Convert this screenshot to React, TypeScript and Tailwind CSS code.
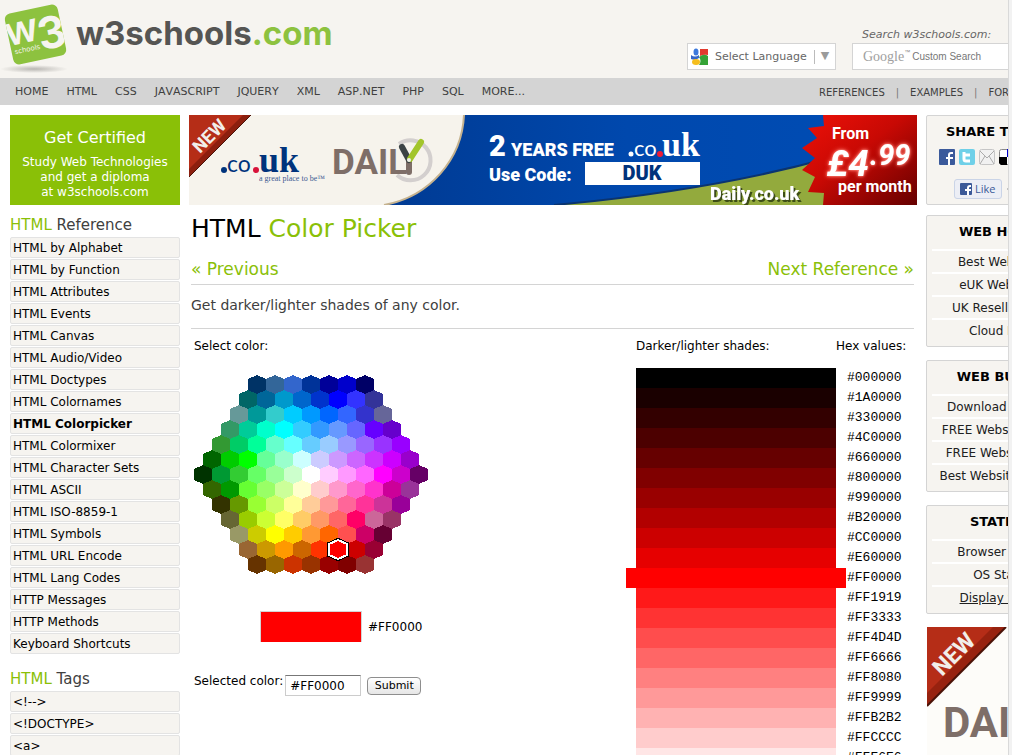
import type { ReactNode } from 'react'

const MAIN_NAV = ['HOME', 'HTML', 'CSS', 'JAVASCRIPT', 'JQUERY', 'XML', 'ASP.NET', 'PHP', 'SQL', 'MORE...']
const SIDE_NAV = ['REFERENCES', 'EXAMPLES', 'FORUM', 'ABOUT']

const REFERENCE_LINKS = [
  'HTML by Alphabet',
  'HTML by Function',
  'HTML Attributes',
  'HTML Events',
  'HTML Canvas',
  'HTML Audio/Video',
  'HTML Doctypes',
  'HTML Colornames',
  'HTML Colorpicker',
  'HTML Colormixer',
  'HTML Character Sets',
  'HTML ASCII',
  'HTML ISO-8859-1',
  'HTML Symbols',
  'HTML URL Encode',
  'HTML Lang Codes',
  'HTTP Messages',
  'HTTP Methods',
  'Keyboard Shortcuts',
]
const TAG_LINKS = ['<!-->', '<!DOCTYPE>', '<a>', '<abbr>']

const PROMO_BOXES = [
  { title: 'WEB HOSTING', links: ['Best Web Hosting', 'eUK Web Hosting', 'UK Reseller Hosting', 'Cloud Hosting'] },
  {
    title: 'WEB BUILDING',
    links: ['Download XML Editor', 'FREE Website BUILDER', 'FREE Website Creator', 'Best Website Templates'],
  },
  { title: 'STATISTICS', links: ['Browser Statistics', 'OS Statistics', 'Display Statistics'] },
]

const HEX_ROWS = [
  '003366 336699 3366CC 003399 000099 0000CC 000066',
  '006666 006699 0099CC 0066CC 0033CC 0000FF 3333FF 333399',
  '669999 009999 33CCCC 00CCFF 0099FF 0066FF 3366FF 3333CC 666699',
  '339966 00CC99 00FFCC 00FFFF 33CCFF 3399FF 6699FF 6666FF 6600FF 6600CC',
  '339933 00CC66 00FF99 66FFCC 66FFFF 66CCFF 99CCFF 9999FF 9966FF 9933FF 9900FF',
  '006600 00CC00 00FF00 66FF99 99FFCC CCFFFF CCCCFF CC99FF CC66FF CC33FF CC00FF 9900CC',
  '003300 009933 33CC33 66FF66 99FF99 CCFFCC FFFFFF FFCCFF FF99FF FF66FF FF00FF CC00CC 660066',
  '336600 009900 66FF33 99FF66 CCFF99 FFFFCC FFCCCC FF99CC FF66CC FF33CC CC0099 993399',
  '333300 669900 99FF33 CCFF66 FFFF99 FFCC99 FF9999 FF6699 FF3399 CC3399 990099',
  '666633 99CC00 CCFF33 FFFF66 FFCC66 FF9966 FF6666 FF0066 CC6699 993366',
  '999966 CCCC00 FFFF00 FFCC00 FF9933 FF6600 FF5050 CC0066 660033',
  '996633 CC9900 FF9900 CC6600 FF3300 FF0000 CC0000 990033',
  '663300 996600 CC3300 993300 990000 800000 993333',
].map((row) => row.split(' '))

const SELECTED = '#FF0000'
const SHADES = [
  '#000000', '#1A0000', '#330000', '#4C0000', '#660000', '#800000', '#990000',
  '#B20000', '#CC0000', '#E60000', '#FF0000', '#FF1919', '#FF3333', '#FF4D4D',
  '#FF6666', '#FF8080', '#FF9999', '#FFB2B2', '#FFCCCC', '#FFE6E6', '#FFFFFF',
]

function Logo() {
  return (
    <svg width="345" height="78" viewBox="0 0 345 78" role="img" aria-label="w3schools.com">
      <defs>
        <radialGradient id="logo-shadow">
          <stop offset="0" stopColor="#b9b7b3" />
          <stop offset="1" stopColor="#f6f4f0" />
        </radialGradient>
        <clipPath id="logo-tile">
          <rect x="-27" y="-26" width="54" height="52" rx="6" />
        </clipPath>
      </defs>
      <ellipse cx="34" cy="69" rx="34" ry="4" fill="url(#logo-shadow)" />
      <g transform="translate(35.5 34.5) rotate(-12)">
        <rect x="-27" y="-26" width="54" height="52" rx="6" fill="#8dc23f" />
        <g clipPath="url(#logo-tile)" fill="#f6f4f0" fontFamily="Inter, sans-serif">
          <text x="-30" y="6" fontSize="40" fontWeight="600">
            w
          </text>
          <text x="2" y="17" fontSize="44" fontWeight="700">
            3
          </text>
        </g>
        <text x="-24" y="15" fill="#f6f4f0" fontSize="7" fontFamily="'DejaVu Sans', sans-serif">
          schools
        </text>
      </g>
      <text x="76" y="45" fontSize="33" fontWeight="700" fontFamily="Inter, sans-serif" fill="#555553">
        w3schools<tspan fill="#8dc23f">.com</tspan>
      </text>
    </svg>
  )
}

function GoogleMark() {
  return (
    <svg width="18" height="18" viewBox="0 0 18 18" aria-hidden="true">
      <path d="M9 1h8v6q-4-1-8 1z" fill="#e23a2e" />
      <path d="M8 9q5-4 9-1v9H8q3-4 0-8z" fill="#35a336" />
      <ellipse cx="5" cy="4" rx="2.5" ry="3.5" fill="#3b78dc" />
      <path d="M0 7q4 3 8 0v3q-4 3-8 1z" fill="#3566c8" />
      <ellipse cx="5" cy="14" rx="4" ry="3" fill="#f5be1d" />
    </svg>
  )
}

function Header() {
  return (
    <header>
      <div className="flex h-[78px] justify-between bg-[#f6f4f0]">
        <a href="/">
          <Logo />
        </a>
        <div className="flex items-end gap-4 pb-2 pr-[10px]">
          <button
            type="button"
            className="flex h-[27px] w-[149px] items-center border border-[#d4d4d4] bg-white pl-[3px] text-[11px] text-[#666666]"
          >
            <GoogleMark />
            <span className="ml-[6px] pt-[2px]">Select Language</span>
            <span className="ml-[7px] h-[14px] w-px bg-[#bbbbbb]" />
            <span className="ml-[6px] text-[#9b9b9b]">▼</span>
          </button>
          <div className="w-[244px]">
            <label htmlFor="search" className="block pl-[10px] text-[11px] leading-4 text-[#666666] italic">
              Search w3schools.com:
            </label>
            <div className="flex h-[27px] items-center border border-[#d4d4d4] bg-white pl-[10px] text-[#888888]">
              <span className="font-['Liberation_Serif',serif] text-[14px] text-[#a0a0a0]">Google</span>
              <span className="self-start pt-1 font-['Liberation_Sans',sans-serif] text-[6px]">™</span>
              <input
                id="search"
                placeholder="Custom Search"
                className="ml-[2px] min-w-0 flex-1 font-['Liberation_Sans',sans-serif] text-[10px] outline-none placeholder:text-[#777777]"
              />
            </div>
          </div>
        </div>
      </div>
      <nav className="flex h-[27px] items-center justify-between bg-[#d4d4d4] pt-[2px] pl-[15px] text-[11px] text-[#404040] [font-kerning:none]">
        <div className="flex gap-[18px]">
          {MAIN_NAV.map((item) => (
            <a key={item} href="#">
              {item}
            </a>
          ))}
        </div>
        <div className="flex w-[287px] gap-[11px] text-[10px]">
          {SIDE_NAV.map((item, i) => (
            <span key={item} className="flex gap-[11px]">
              {i > 0 && <span className="text-[#777777]">|</span>}
              <a href="#">{item}</a>
            </span>
          ))}
        </div>
      </nav>
    </header>
  )
}

function LinkList({ topic, links }: { topic: string; links: string[] }) {
  return (
    <section>
      <h2 className="text-[15px] leading-5 text-[#404040]">
        <span className="text-[#8ac007]">HTML</span> {topic}
      </h2>
      <ul className="mt-[2px] flex flex-col gap-px">
        {links.map((link) => (
          <li key={link} className="h-[21px] rounded-xs border border-[#e3e3e3] bg-[#f6f4f0] pl-[2px] leading-5">
            <a href="#" className={link === 'HTML Colorpicker' ? 'font-bold' : undefined}>
              {link}
            </a>
          </li>
        ))}
      </ul>
    </section>
  )
}

function Sidebar() {
  return (
    <aside className="w-[170px] shrink-0 text-[12px] text-black">
      <a href="#" className="block h-[90px] bg-[#8ac007] pt-[13px] text-center leading-[15px] text-white">
        <span className="mb-[7px] block text-[16px] leading-5">Get Certified</span>
        Study Web Technologies
        <br />
        and get a diploma
        <br />
        at w3schools.com
      </a>
      <div className="flex flex-col gap-[15px] pt-[10px]">
        <LinkList topic="Reference" links={REFERENCE_LINKS} />
        <LinkList topic="Tags" links={TAG_LINKS} />
      </div>
    </aside>
  )
}

function NewRibbon() {
  return (
    <g>
      <path d="M0 0H62L0 62z" fill="#b52d17" />
      <path d="M62 0L0 62V54L54 0z" fill="#8c1f0e" />
      <path d="M62 0L0 62" stroke="#4a1208" />
      <text
        transform="translate(11 39) rotate(-45)"
        fontFamily="Roboto, sans-serif"
        fontSize="18"
        fontWeight="700"
        fill="#f1eeea"
      >
        NEW
      </text>
    </g>
  )
}

function BannerAd() {
  return (
    <svg width="728" height="90" viewBox="0 0 728 90" role="img" aria-label="Daily.co.uk domain offer" className="block">
      <defs>
        <linearGradient id="ad-blue" x1="0" x2="1">
          <stop offset="0" stopColor="#002f7d" />
          <stop offset="0.6" stopColor="#0048ad" />
          <stop offset="1" stopColor="#004db5" />
        </linearGradient>
        <linearGradient id="ad-red" x1="0" x2="1" y1="0" y2="1">
          <stop offset="0" stopColor="#ee1108" />
          <stop offset="0.45" stopColor="#c80904" />
          <stop offset="1" stopColor="#650000" />
        </linearGradient>
        <filter id="ad-glow" x="-20%" y="-30%" width="140%" height="160%">
          <feDropShadow dx="0" dy="0" stdDeviation="1" floodColor="#ff8a80" />
          <feDropShadow dx="0" dy="0" stdDeviation="2" floodColor="#ff6a5e" />
        </filter>
        <filter id="ad-drop">
          <feDropShadow dx="2" dy="2" stdDeviation="0" floodColor="#3d4d13" />
        </filter>
      </defs>
      <rect width="728" height="90" fill="url(#ad-blue)" />
      <path d="M365 90Q520 76 640 43V90z" fill="#93aa3d" />
      <path d="M365 90Q520 76 640 43" fill="none" stroke="#0a3470" strokeWidth="2" />
      <path d="M0 0H275C273 45 240 82 195 90H0z" fill="#f6f3ec" />
      <path d="M275 0C273 45 240 82 195 90" fill="none" stroke="#c5b28e" strokeWidth="2" />
      <NewRibbon />

      <circle cx="35" cy="55" r="3" fill="#00337c" />
      <text x="38" y="57" fontFamily="Lato, sans-serif" fontSize="23" fill="#00337c">
        co
      </text>
      <circle cx="67" cy="55" r="3" fill="#d8123a" />
      <text x="70" y="57" fontFamily="'Liberation Serif', serif" fontSize="36" fontWeight="700" fill="#00337c">
        uk
      </text>
      <text x="70" y="66" fontFamily="'Liberation Serif', serif" fontSize="8" fill="#3c5a92">
        a great place to be™
      </text>

      <path d="M210 29A20 20 0 1 1 208 60" fill="none" stroke="#d3cfce" strokeWidth="4" />
      <text x="143" y="59" fontFamily="Roboto, sans-serif" fontSize="35" fontWeight="700" fill="#7e6e68">
        DAIL
      </text>
      <path d="M220 45V57" stroke="#7e6e68" strokeWidth="6" strokeLinecap="round" />
      <path d="M213 32L220 45" stroke="#3c4345" strokeWidth="6" strokeLinecap="round" />
      <path d="M221 44L232 27" stroke="#a2c52b" strokeWidth="6" strokeLinecap="round" />
      <circle cx="220" cy="45" r="2" fill="#eeeeee" />

      <g fontFamily="Roboto, sans-serif" fontWeight="900" fill="#ffffff">
        <text x="300" y="41" fontSize="29">
          2
        </text>
        <text x="322" y="41" fontSize="18">
          YEARS FREE
        </text>
        <text x="300" y="66" fontSize="18">
          Use Code:
        </text>
      </g>
      <circle cx="442" cy="39" r="2.5" fill="#ffffff" />
      <text x="445" y="41" fontFamily="Lato, sans-serif" fontSize="22" fill="#ffffff">
        co
      </text>
      <circle cx="471" cy="39" r="3" fill="#ef1b34" />
      <text x="473" y="41" fontFamily="'Liberation Serif', serif" fontSize="34" fontWeight="700" fill="#ffffff">
        uk
      </text>
      <rect x="396" y="47" width="115" height="23" fill="#ffffff" />
      <text x="453" y="65" textAnchor="middle" fontFamily="Roboto, sans-serif" fontSize="20" fontWeight="900" fill="#00337c">
        DUK
      </text>
      <text
        x="521"
        y="85"
        fontFamily="Roboto, sans-serif"
        fontSize="18"
        fontWeight="900"
        fill="#ffffff"
        filter="url(#ad-drop)"
      >
        Daily.co.uk
      </text>

      <path
        d="M728 0H634L635 11L619 13L628 23L613 33L626 43L613 55L626 62L619 77L635 78L634 90H728z"
        fill="url(#ad-red)"
      />
      <g fontFamily="Roboto, sans-serif" fontWeight="700" fill="#ffffff">
        <text x="643" y="24" fontSize="16">
          From
        </text>
        <g fontStyle="italic" filter="url(#ad-glow)">
          <text x="638" y="61" fontSize="37">
            £4
          </text>
          <text x="681" y="50" fontSize="29">
            .99
          </text>
        </g>
        <text x="649" y="77" fontSize="16">
          per month
        </text>
      </g>
    </svg>
  )
}

function HexMap() {
  const points = (x: number, y: number) =>
    `${x + 9},${y} ${x + 18},${y + 4} ${x + 18},${y + 15} ${x + 9},${y + 19} ${x},${y + 15} ${x},${y + 4}`
  const cells = HEX_ROWS.flatMap((row, r) =>
    row.map((color, c) => ({ color: `#${color}`, points: points((13 - row.length) * 9 + c * 18, r * 15) })),
  )
  const active = cells.find((cell) => cell.color === SELECTED)

  return (
    <svg width="234" height="199" viewBox="0 0 234 199" role="img" aria-label="Color map" shapeRendering="crispEdges">
      {cells.map((cell) => (
        <polygon key={cell.color} points={cell.points} fill={cell.color} />
      ))}
      {active && (
        <>
          <polygon points={active.points} fill={SELECTED} stroke="#000000" strokeWidth="4" />
          <polygon points={active.points} fill={SELECTED} stroke="#ffffff" strokeWidth="2" />
        </>
      )}
    </svg>
  )
}

function ShadeTable() {
  return (
    <table className="text-left">
      <thead>
        <tr className="h-[30px] align-top leading-4">
          <th className="w-[220px] pl-[10px] font-normal">Darker/lighter shades:</th>
          <th className="w-[68px] font-normal whitespace-nowrap">
            <span className="-ml-[10px]">Hex values:</span>
          </th>
        </tr>
      </thead>
      <tbody>
        {SHADES.map((shade) => (
          <tr key={shade} className="h-5">
            <td className={shade === SELECTED ? 'p-0' : 'px-[10px]'}>
              <div className="h-5" style={{ backgroundColor: shade }} />
            </td>
            <td className="py-0 pl-px font-['Liberation_Mono',monospace] text-[13px] leading-5">{shade}</td>
          </tr>
        ))}
      </tbody>
    </table>
  )
}

function Picker() {
  return (
    <div className="flex justify-between pl-[3px] pt-[9px] text-[12px] text-black">
      <div className="leading-4">
        <p>Select color:</p>
        <div className="mt-[21px]">
          <HexMap />
        </div>
        <div className="mt-[37px] ml-[66px] flex items-center gap-[6px]">
          <div className="h-[31px] w-[102px] border border-b-0 border-[#d4d4d4]" style={{ backgroundColor: SELECTED }} />
          <span>{SELECTED}</span>
        </div>
        <form className="mt-[31px] flex items-start" onSubmit={(e) => e.preventDefault()}>
          <label htmlFor="color">Selected color:</label>
          <input
            id="color"
            defaultValue={SELECTED}
            className="mt-[2px] ml-[2px] h-[21px] w-[76px] border border-[#cccccc] border-t-[#777777] px-1"
          />
          <button
            type="submit"
            className="mt-1 ml-[6px] h-[18px] w-[54px] rounded border border-[#8e8e8e] bg-linear-to-b from-white to-[#e6e6e6] text-[11px] leading-4"
          >
            Submit
          </button>
        </form>
      </div>
      <ShadeTable />
    </div>
  )
}

function Content() {
  return (
    <main className="min-w-0 flex-1">
      <BannerAd />
      <div className="pl-[2px] pr-[3px]">
        <h1 className="mt-[6px] text-[25px] leading-[36px] text-black">
          HTML <span className="text-[#8ac007]">Color Picker</span>
        </h1>
        <div className="mt-[13px] flex justify-between border-b border-[#d4d4d4] pb-[5px] text-[17px] leading-[19px] text-[#8ac007]">
          <a href="#">« Previous</a>
          <a href="#">Next Reference »</a>
        </div>
        <p className="border-b border-[#d4d4d4] pt-[10px] pb-3 text-[14px] leading-[21px] text-[#404040]">
          Get darker/lighter shades of any color.
        </p>
        <Picker />
      </div>
    </main>
  )
}

function Box({ title, children }: { title: string; children: ReactNode }) {
  return (
    <section className="rounded-xs border border-[#d4d4d4] bg-[#f6f4f0] px-[5px] pt-2 pb-[5px] text-center">
      <h3 className="text-[13px] leading-4 font-bold text-black">{title}</h3>
      {children}
    </section>
  )
}

function SocialIcons() {
  return (
    <svg width="140" height="18" viewBox="0 0 140 18" role="img" aria-label="Share links">
      <rect x="1" y="1" width="16" height="16" rx="1" fill="#3b5a9b" />
      <path d="M15 5h-2q-2 0-2 2v10M8 10h7" fill="none" stroke="#ffffff" strokeWidth="2" />
      <rect x="21" y="1" width="16" height="16" rx="2" fill="#6fd0e8" />
      <path d="M26 4v7q0 2 2 2h4M26 7h6" fill="none" stroke="#ffffff" strokeWidth="3" />
      <rect x="41.5" y="1.5" width="15" height="15" rx="2" fill="#f1f1f1" stroke="#c6c6c6" />
      <path d="M42 3l7 7 7-7M42 16l5-8M56 16l-5-8" fill="none" stroke="#ababab" />
      <rect x="61.5" y="1.5" width="15" height="15" rx="2" fill="#ffffff" stroke="#8b8b8b" />
      <path d="M61 9h8v8h-6l-2-2z" fill="#000000" />
      <path d="M69 1h8v8h-8z" fill="#0000cc" />
      <rect x="81" y="1" width="16" height="16" rx="2" fill="#f26a22" />
      <rect x="101" y="1" width="16" height="16" rx="2" fill="#cc3732" />
      <rect x="121" y="1" width="16" height="16" rx="2" fill="#7c9c3c" />
    </svg>
  )
}

function RightColumn() {
  return (
    <aside className="w-[170px] shrink-0 text-[12px] text-[#202020]">
      <Box title="SHARE THIS PAGE">
        <div className="mt-2 flex pl-[6px]">
          <SocialIcons />
        </div>
        <div className="mt-[13px] flex items-center gap-1 pl-[22px]">
          <button
            type="button"
            className="flex h-5 w-12 items-center gap-[3px] rounded-[3px] border border-[#cad4e7] bg-[#eceef5] pl-[5px] font-['Open_Sans',sans-serif] text-[11px] text-[#3b5998]"
          >
            <svg width="12" height="12" viewBox="0 0 12 12" aria-hidden="true">
              <rect width="12" height="12" rx="1" fill="#3b5998" />
              <path d="M11 3h-1q-2 0-2 2v7M5 7h6" fill="none" stroke="#ffffff" strokeWidth="2" />
            </svg>
            Like
          </button>
          <svg width="6" height="10" viewBox="0 0 6 10" aria-hidden="true">
            <path d="M5 1L1 5l4 4" fill="none" stroke="#c1c1c1" />
          </svg>
        </div>
      </Box>
      <div className="flex flex-col gap-[13px] pt-[10px]">
        {PROMO_BOXES.map((box) => (
          <Box key={box.title} title={box.title}>
            <ul className="mt-[9px]">
              {box.links.map((link) => (
                <li key={link} className="h-[23px] border-t-2 border-white leading-[22px]">
                  <a href="#" className={link === 'Display Statistics' ? 'underline' : undefined}>
                    {link}
                  </a>
                </li>
              ))}
            </ul>
          </Box>
        ))}
      </div>
      <svg width="168" height="200" viewBox="0 0 168 200" className="mt-[13px] ml-px bg-[#fdfcf9]" role="img" aria-label="Daily.co.uk">
        <path d="M0 0H79L0 79z" fill="#b52d17" />
        <path d="M79 0L0 79V66L66 0z" fill="#97220f" />
        <path d="M79 0L0 79" stroke="#4a1208" strokeWidth="2" />
        <text
          transform="translate(15 50) rotate(-45)"
          fontFamily="Roboto, sans-serif"
          fontSize="23"
          fontWeight="700"
          fill="#f1eeea"
        >
          NEW
        </text>
        <text x="16" y="110" fontFamily="Roboto, sans-serif" fontSize="42" fontWeight="700" fill="#7e6e68">
          DAILY
        </text>
      </svg>
    </aside>
  )
}

export default function App() {
  return (
    <div className="flex h-screen overflow-hidden bg-white font-['DejaVu_Sans',Verdana,sans-serif]">
      <div className="min-w-0 flex-1 overflow-hidden">
        <div className="min-w-[1106px]">
          <Header />
          <div className="flex gap-[9px] p-[10px]">
            <Sidebar />
            <Content />
            <RightColumn />
          </div>
        </div>
      </div>
      <div className="w-1 shrink-0 border-l border-[#d9d9d9] bg-[#f2f2f2]" />
    </div>
  )
}
